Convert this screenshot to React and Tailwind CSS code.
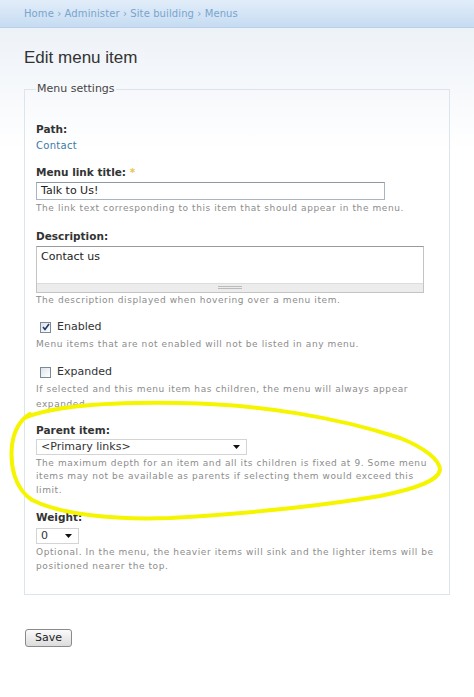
import React from 'react';

const help = "text-[9px] leading-[13.5px] text-[#8c8c8c] tracking-[0.58px]";
const label = "text-[10.5px] leading-[14px] font-bold text-[#333]";

const SelectBox = ({ value, width }) => (
  <div className={`flex items-center justify-between h-[16px] border border-[#d4d4d4] bg-white pl-[4px] pr-[6px] ${width}`}>
    <span className="text-[11px] leading-[14px] text-[#333]">{value}</span>
    <svg width="7" height="4" viewBox="0 0 7 4"><path d="M0 0h7L3.5 4z" fill="#111" /></svg>
  </div>
);

const Checkbox = ({ checked }) => (
  <span className="flex items-center justify-center w-[11px] h-[11px] border border-[#7a8a99] bg-[linear-gradient(135deg,#dfe4ea,#ffffff)]">
    {checked && (
      <svg width="8" height="8" viewBox="0 0 8 8"><path d="M1 4l2 2.5L7 1" stroke="#1f3b70" strokeWidth="1.6" fill="none" /></svg>
    )}
  </span>
);

export default function App() {
  return (
    <div className="relative min-h-screen w-[474px] bg-[linear-gradient(to_bottom,#e9eff6_0px,#ffffff_150px)] pb-[48px]" style={{ fontFamily: '"DejaVu Sans", Verdana, sans-serif' }}>
      <div className="h-[28px] bg-[linear-gradient(to_bottom,#e2edf9,#c6dcf2)] border-b border-[#b9d0e8] pl-[24px] flex items-center">
        <span className="text-[10px] text-[#78a5cc] tracking-[0.1px]">Home › Administer › Site building › Menus</span>
      </div>

      <div className="pl-[24px] pr-[24px]">
        <h1 className="mt-[19px] text-[17px] leading-[22px] text-[#333]" style={{ fontFamily: '"Liberation Sans", Arial, sans-serif' }}>Edit menu item</h1>

        <fieldset className="mt-[13px] w-[426px] border border-[#dde5ec] pl-[11px] pr-[12px] pt-[26px] pb-[21px]">
          <legend className="px-[1px] text-[11px] leading-[14px] text-[#444]">Menu settings</legend>

          <div>
            <div className={label}>Path:</div>
            <div className="mt-[3px] text-[10px] leading-[13px] text-[#3b7aa8] tracking-[0.3px]">Contact</div>
          </div>

          <div className="mt-[13px]">
            <div className={label}>Menu link title: <span className="text-[#e8c44a]">*</span></div>
            <div className="mt-[3px] w-[349px] h-[18px] border border-[#a9b5c0] border-t-[#8c99a6] bg-white pl-[4px] flex items-center">
              <span className="text-[11px] text-[#222]">Talk to Us!</span>
            </div>
            <div className={`mt-[2px] ${help}`}>The link text corresponding to this item that should appear in the menu.</div>
          </div>

          <div className="mt-[13px]">
            <div className={label}>Description:</div>
            <div className="mt-[3px] w-[388px] h-[47px] border border-[#c4c4c4] border-t-[#9a9a9a] bg-white flex flex-col">
              <div className="flex-1 pl-[4px] pt-[3px] text-[11px] leading-[14px] text-[#222]">Contact us</div>
              <div className="h-[9px] bg-[#ececec] border-t border-[#dcdcdc] flex items-center justify-center">
                <div className="w-[24px] h-[3px] border-t border-b border-[#bbb]" />
              </div>
            </div>
            <div className={`mt-[1px] ${help}`}>The description displayed when hovering over a menu item.</div>
          </div>

          <div className="mt-[13px]">
            <div className="flex items-center gap-[6px] pl-[4px] h-[14px]">
              <Checkbox checked />
              <span className="text-[11px] text-[#333]">Enabled</span>
            </div>
            <div className={`mt-[4px] ${help}`}>Menu items that are not enabled will not be listed in any menu.</div>
          </div>

          <div className="mt-[14px]">
            <div className="flex items-center gap-[6px] pl-[4px] h-[14px]">
              <Checkbox />
              <span className="text-[11px] text-[#333]">Expanded</span>
            </div>
            <div className={`mt-[2px] ${help} leading-[15px]`}>If selected and this menu item has children, the menu will always appear expanded.</div>
          </div>

          <div className="mt-[11px]">
            <div className={label}>Parent item:</div>
            <div className="mt-[2px]"><SelectBox value="<Primary links>" width="w-[211px]" /></div>
            <div className={`mt-[2px] ${help}`}>The maximum depth for an item and all its children is fixed at 9. Some menu items may not be available as parents if selecting them would exceed this limit.</div>
          </div>

          <div className="mt-[13px]">
            <div className={label}>Weight:</div>
            <div className="mt-[4px]"><SelectBox value="0" width="w-[43px]" /></div>
            <div className={`mt-[2px] ${help}`}>Optional. In the menu, the heavier items will sink and the lighter items will be positioned nearer the top.</div>
          </div>
        </fieldset>

        <button className="mt-[34px] ml-[1px] h-[18px] w-[47px] rounded-[3px] border border-[#8a8a8a] bg-[linear-gradient(to_bottom,#fbfbfb,#dcdcdc)] text-[11px] leading-[14px] text-[#222]">Save</button>
      </div>

      <svg className="absolute left-0 top-0 pointer-events-none" width="474" height="697" viewBox="0 0 474 697">
        <path
          d="M27 417 C 60 404, 120 402, 180 403 C 260 404, 340 418, 400 438 C 425 448, 440 460, 440 470 C 438 480, 420 488, 380 496 C 320 506, 240 514, 170 518 C 110 520, 60 514, 32 500 C 14 488, 10 465, 12 445 C 14 430, 20 420, 30 414"
          stroke="#f5f500"
          strokeWidth="4"
          fill="none"
          strokeLinecap="round"
        />
      </svg>
    </div>
  );
}
